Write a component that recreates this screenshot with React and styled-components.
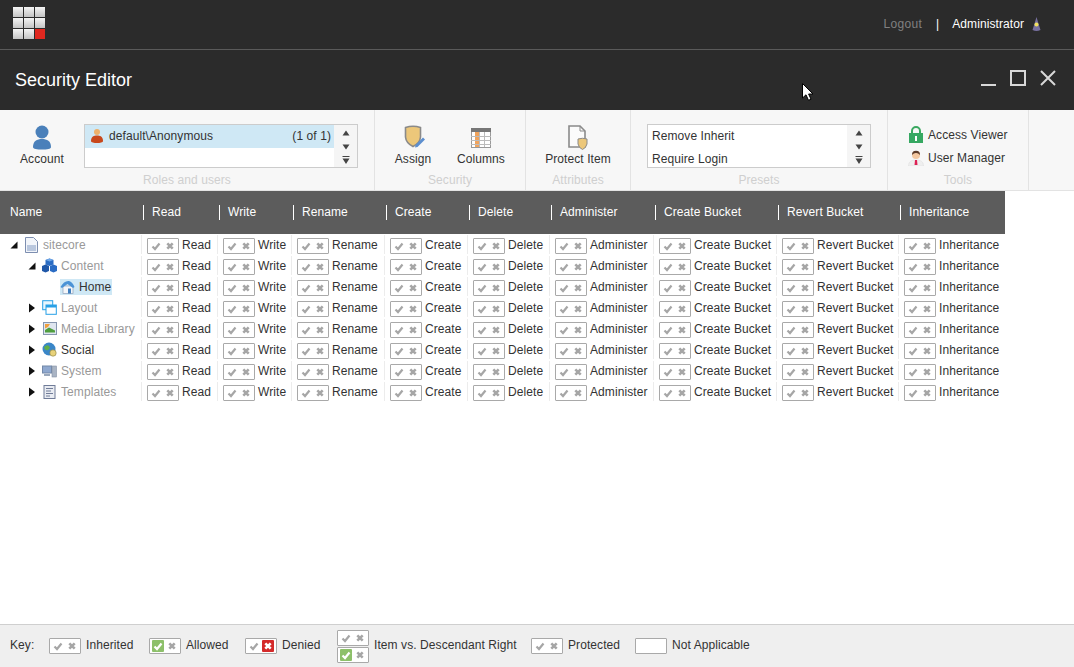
import React from "react"
import styled, { createGlobalStyle } from "styled-components"

const GlobalStyle = createGlobalStyle`
  html, body {
    margin: 0;
    padding: 0;
    height: 100%;
    background: #fff;
    font-family: "Liberation Sans", Arial, sans-serif;
    font-size: 12px;
    letter-spacing: 0.08px;
    color: #333;
  }
  * { box-sizing: border-box; }
`

const Page = styled.div`
  display: flex;
  flex-direction: column;
  height: 667px;
  overflow: hidden;
`

const TopBar = styled.header`
  display: flex;
  align-items: flex-start;
  justify-content: space-between;
  height: 50px;
  padding: 7px 33px 0 13px;
  background: #2b2b2b;
  border-bottom: 1px solid #5a5a5a;
`

const LogoGrid = styled.div`
  display: grid;
  grid-template-columns: repeat(3, 10px);
  grid-auto-rows: 10px;
  gap: 1px;
`

const LogoTile = styled.span`
  background: ${props => (props.$red ? "#e0281f" : "linear-gradient(#f4f4f4, #c4c4c4)")};
`

const UserArea = styled.div`
  display: flex;
  align-items: center;
  height: 34px;
  color: #fff;
`

const Logout = styled.span`
  color: #808080;
  letter-spacing: 0.3px;
  margin-right: 14px;
`

const Pipe = styled.span`
  margin-right: 13px;
`

const UserName = styled.span`
  margin-right: 8px;
`

const TitleBar = styled.div`
  position: relative;
  display: flex;
  align-items: center;
  justify-content: space-between;
  height: 60px;
  padding: 0 18px 0 15px;
  background: #2b2b2b;
`

const Title = styled.h1`
  margin: 0;
  font-size: 18px;
  font-weight: normal;
  letter-spacing: 0;
  color: #fff;
`

const WindowButtons = styled.div`
  display: flex;
  align-items: center;
  gap: 14px;
  margin-top: -4px;
`

const Cursor = styled.svg`
  position: absolute;
  left: 802px;
  top: 33px;
`

const Ribbon = styled.div`
  display: flex;
  height: 81px;
  flex: none;
  background: #f7f7f7;
  border-bottom: 1px solid #e3e3e3;
`

const Chunk = styled.section`
  display: flex;
  flex-direction: column;
  width: ${props => props.$width}px;
  border-right: 1px solid #e3e3e3;
`

const ChunkBody = styled.div`
  display: flex;
  height: 62px;
  padding: ${props => props.$padding || "14px 0 0 0"};
`

const Caption = styled.div`
  text-align: center;
  color: #cfcfcf;
  line-height: 14px;
  margin-top: 1px;
`

const LargeButton = styled.div`
  display: flex;
  flex-direction: column;
  align-items: center;
  width: ${props => props.$width || 68}px;
  height: 44px;
  color: #333;
  line-height: 14px;
  svg { display: block; height: 26px; margin-bottom: 2px; }
`

const ListBox = styled.div`
  display: flex;
  width: ${props => props.$width}px;
  height: 44px;
  background: #fff;
  border: 1px solid #ccc;
`

const ListRows = styled.div`
  flex: 1;
  min-width: 0;
`

const ListRow = styled.div`
  display: flex;
  align-items: center;
  justify-content: space-between;
  height: 23px;
  padding: 0 3px 2px ${props => (props.$selected ? 6 : 4)}px;
  background: ${props => (props.$selected ? "#cfe8f5" : "transparent")};
`

const ListLabel = styled.span`
  display: flex;
  align-items: center;
  gap: 6px;
`

const ScrollColumn = styled.div`
  display: flex;
  flex-direction: column;
  align-items: center;
  justify-content: space-between;
  flex: none;
  width: 23px;
  padding: 3px 0 2px;
  background: #f5f5f5;
`

const ToolList = styled.div`
  display: flex;
  flex-direction: column;
`

const ToolRow = styled.div`
  display: flex;
  align-items: center;
  gap: 4px;
  height: 23px;
  svg { flex: none; }
`

const Table = styled.div`
  flex: 1;
  width: 1005px;
`

const HeaderRow = styled.div`
  display: grid;
  grid-template-columns: 143px 76px 74px 93px 83px 82px 104px 123px 122px 105px;
  height: 43px;
  background: #5c5c5c;
  color: #fff;
  align-items: center;
`

const HeaderCell = styled.div`
  height: 15px;
  line-height: 15px;
  padding-left: ${props => (props.$first ? 10 : 8)}px;
  border-left: ${props => (props.$first ? "none" : "1px solid #fff")};
`

const Row = styled.div`
  display: grid;
  grid-template-columns: 141px 76px 74px 93px 83px 82px 104px 123px 122px 107px;
  height: 21px;
`

const TreeCell = styled.div`
  display: flex;
  align-items: center;
  padding-left: ${props => props.$indent}px;
  color: ${props => props.$color || "#999"};
`

const Toggle = styled.svg`
  flex: none;
  width: 8px;
  height: 10px;
  margin-right: 6px;
  visibility: ${props => (props.$hidden ? "hidden" : "visible")};
`

const TreeLabel = styled.span`
  display: flex;
  align-items: center;
  gap: 4px;
  height: 16px;
  padding-right: ${props => (props.$selected ? 1 : 0)}px;
  background: ${props => (props.$selected ? "#cfe8f5" : "transparent")};
`

const TreeIconSlot = styled.span`
  display: flex;
  align-items: center;
  justify-content: center;
  flex: none;
  width: 15px;
  height: 16px;
`

const PermCell = styled.div`
  display: flex;
  align-items: center;
  gap: 3px;
  margin: 1px 0;
  padding-left: 5px;
  border-left: 1px solid #ececec;
  color: #333;
  white-space: nowrap;
`

const Tray = styled.span`
  display: flex;
  flex: none;
  align-items: center;
  justify-content: space-between;
  width: 32px;
  height: 16px;
  margin-top: 2px;
  padding: 0 2px;
  background: #fff;
  border: 1px solid #a9a9a9;
  border-radius: 1px;
`

const Mark = styled.span`
  display: flex;
  align-items: center;
  justify-content: center;
  width: 12px;
  height: 12px;
  border-radius: 1px;
  background: ${props => props.$bg || "transparent"};
`

const KeyBar = styled.footer`
  display: flex;
  align-items: center;
  gap: 15px;
  flex: none;
  height: 43px;
  padding: 0 0 2px 10px;
  background: #efefef;
  border-top: 1px solid #cfcfcf;
`

const KeyItem = styled.div`
  display: flex;
  align-items: center;
  gap: 5px;
`

const KeyLabel = styled.span`
  width: ${props => props.$width}px;
  white-space: nowrap;
`

const KeyStack = styled.div`
  display: flex;
  flex-direction: column;
  gap: 1px;
  margin-top: 2px;
  ${Tray} { margin-top: 0; }
`

const CheckGlyph = ({ color = "#a6a6a6" }) => (
  <svg width="10" height="10" viewBox="0 0 10 10">
    <path d="M1.5 5.5 L4 8 L8.5 2.5" fill="none" stroke={color} strokeWidth="2.2" />
  </svg>
)

const CrossGlyph = ({ color = "#a6a6a6" }) => (
  <svg width="10" height="10" viewBox="0 0 10 10">
    <path d="M2.3 2.3 L7.7 7.7 M7.7 2.3 L2.3 7.7" fill="none" stroke={color} strokeWidth="2.6" />
  </svg>
)

const PermTray = ({ allowed, denied, empty }) => (
  <Tray>
    {!empty && (
      <>
        <Mark $bg={allowed ? "#8dc06a" : undefined}>
          <CheckGlyph color={allowed ? "#fff" : "#a6a6a6"} />
        </Mark>
        <Mark $bg={denied ? "#d42a2a" : undefined}>
          <CrossGlyph color={denied ? "#fff" : "#a6a6a6"} />
        </Mark>
      </>
    )}
  </Tray>
)

const Arrow = ({ kind }) => (
  <svg width="10" height="10" viewBox="0 0 10 10">
    {kind === "up" && <path d="M1.5 7.5 L8.5 7.5 L5 2.5 Z" fill="#444" />}
    {kind === "down" && <path d="M1.5 2.5 L8.5 2.5 L5 7.5 Z" fill="#444" />}
    {kind === "end" && <path d="M1.5 1 H8.5 V2 H1.5 Z M1.5 3.5 L8.5 3.5 L5 9 Z" fill="#444" />}
  </svg>
)

const Scroller = () => (
  <ScrollColumn>
    <Arrow kind="up" />
    <Arrow kind="down" />
    <Arrow kind="end" />
  </ScrollColumn>
)

const AccountIcon = () => (
  <svg width="20" height="26" viewBox="0 0 20 26">
    <circle cx="10" cy="8" r="6.5" fill="#4a80ba" />
    <path d="M1 23 C1 17 5 15 10 15 C15 15 19 17 19 23 C19 25 15 25.5 10 25.5 C5 25.5 1 25 1 23 Z" fill="#4a80ba" />
  </svg>
)

const PersonIcon = () => (
  <svg width="12" height="15" viewBox="0 0 12 15">
    <circle cx="6" cy="4" r="3" fill="#eeb06a" />
    <path d="M0 13 C0 8.5 3 7.5 6 7.5 C9 7.5 12 8.5 12 13 C12 14.5 9 15 6 15 C3 15 0 14.5 0 13 Z" fill="#c8481c" />
  </svg>
)

const AdminIcon = () => (
  <svg width="9" height="15" viewBox="0 0 9 15">
    <path d="M4.5 0 L6 5 L8.5 13 Q4.5 15 0.5 13 L3 5 Z" fill="#77709f" />
    <circle cx="4.5" cy="7.5" r="2" fill="#f0e060" />
  </svg>
)

const AssignIcon = () => (
  <svg width="26" height="26" viewBox="-4 0 26 26">
    <path d="M1.5 3.5 Q9 1 16.5 3.5 V13 Q16 19 9 22.5 Q2 19 1.5 13 Z" fill="#ecc77a" stroke="#8a8a8a" strokeWidth="1.6" />
    <path d="M11.5 21 L19 13.5 L21 15.5 L13.5 23 L11 23.5 Z" fill="#5d8fcf" />
  </svg>
)

const ColumnsIcon = () => (
  <svg width="22" height="26" viewBox="0 0 22 26">
    <rect x="1.5" y="4.5" width="19" height="19" fill="#fff" stroke="#999" />
    <rect x="1" y="4" width="20" height="4" fill="#777" />
    <rect x="5" y="8" width="4" height="15" fill="#f0a35c" />
    <path d="M9.5 8 V23 M14.5 8 V23 M1 12.5 H21 M1 16.5 H21 M1 20.5 H21" stroke="#bbb" strokeWidth="1" />
  </svg>
)

const ProtectIcon = () => (
  <svg width="22" height="26" viewBox="0 0 22 26">
    <path d="M2 2 H13 L18 7 V23 H2 Z" fill="#fbfbfb" stroke="#8a8a8a" strokeWidth="1.6" />
    <path d="M13 2 V7 H18" fill="none" stroke="#8a8a8a" />
    <path d="M11 15 Q15.5 13.5 20 15 V20 Q19 24 15.5 25.5 Q12 24 11 20 Z" fill="#ecc77a" stroke="#8a8a8a" />
  </svg>
)

const LockIcon = () => (
  <svg width="16" height="17" viewBox="0 0 16 17">
    <path d="M4 8 V5 A4 4 0 0 1 12 5 V8" fill="none" stroke="#3aa860" strokeWidth="2" />
    <rect x="1" y="7" width="14" height="10" fill="#36a862" />
    <rect x="7" y="10" width="2" height="5" fill="#fff" />
  </svg>
)

const ManagerIcon = () => (
  <svg width="16" height="16" viewBox="0 0 16 16">
    <path d="M0.5 16 C0.5 11 4 10 8 10 C12 10 15.5 11 15.5 16 Z" fill="#efefef" stroke="#ddd" strokeWidth="0.5" />
    <path d="M7 10 H9 L9.5 15 H6.5 Z" fill="#dd2255" />
    <circle cx="8" cy="5" r="4" fill="#f3c7a0" />
    <path d="M4 5 Q4 0.8 8 0.8 Q12 0.8 12 5 Q10 2.8 8 3 Q6 2.8 4 5 Z" fill="#5a3a2a" />
  </svg>
)

const treeIcons = {
  doc: (
    <svg width="13" height="16" viewBox="0 0 13 16">
      <path d="M0.5 0.5 H8.5 L12.5 4.5 V15.5 H0.5 Z" fill="#f2f5fa" stroke="#7d8eb0" />
      <rect x="2" y="8" width="9" height="6" fill="#b9c7de" />
    </svg>
  ),
  cubes: (
    <svg width="15" height="15" viewBox="0 0 15 15">
      <path d="M7.5 0.5 L11.5 2 V6.5 L7.5 8 L3.5 6.5 V2 Z" fill="#2a6cc4" />
      <path d="M3.5 6.5 L7 8 V13 L3.5 14.5 L0 13 V8 Z" fill="#1f57a8" />
      <path d="M11.5 6.5 L15 8 V13 L11.5 14.5 L8 13 V8 Z" fill="#2a6cc4" />
      <path d="M7.5 0.5 L11.5 2 L7.5 3.5 L3.5 2 Z" fill="#6ea6e6" />
    </svg>
  ),
  home: (
    <svg width="15" height="15" viewBox="0 0 15 15">
      <rect x="3" y="7" width="10" height="7.5" fill="#f4f6f9" stroke="#8fa0b8" strokeWidth="0.7" />
      <path d="M0.5 8 Q4 1.5 9 2 Q12.5 3 14.5 8 L13 9 L7.5 5 L2 9 Z" fill="#4b93d6" />
      <rect x="8" y="9.5" width="3" height="5" fill="#3e7fc0" />
    </svg>
  ),
  layout: (
    <svg width="15" height="15" viewBox="0 0 15 15">
      <rect x="0.7" y="0.7" width="10" height="9" fill="#e8f6fe" stroke="#27a0e6" />
      <rect x="4" y="5" width="10.3" height="9.3" fill="#fff" stroke="#27a0e6" />
      <rect x="4" y="5" width="10.3" height="2.5" fill="#27a0e6" />
    </svg>
  ),
  media: (
    <svg width="14" height="13" viewBox="0 0 14 13">
      <rect x="0.5" y="0.5" width="13" height="12" fill="#dfe6f0" stroke="#8696b0" />
      <path d="M2 10.5 V8 L6 5.5 L12 8.5 V10.5 Z" fill="#4f9e3f" />
      <path d="M2 2 H7 L5 5 L2 6.5 Z" fill="#f0a040" />
    </svg>
  ),
  social: (
    <svg width="15" height="15" viewBox="0 0 15 15">
      <circle cx="7" cy="7" r="6.5" fill="#3a86c8" />
      <path d="M2 5 Q5 2 7 4 Q9 6 6 8 Q3 9 2 5 Z" fill="#5fae4a" />
      <circle cx="11" cy="11" r="3.2" fill="#e8d27a" stroke="#8a8040" strokeWidth="0.6" />
    </svg>
  ),
  system: (
    <svg width="15" height="14" viewBox="0 0 15 14">
      <rect x="0.5" y="2" width="9" height="7" fill="#8fa8cf" stroke="#7288a8" />
      <rect x="2" y="10" width="6" height="2" fill="#9aa8bc" />
      <rect x="10" y="2" width="4.5" height="11" fill="#a9b4c4" stroke="#8592a6" strokeWidth="0.6" />
    </svg>
  ),
  templates: (
    <svg width="13" height="14" viewBox="0 0 13 14">
      <rect x="1" y="0.5" width="11" height="13" fill="#e9ecf2" stroke="#707c98" />
      <path d="M3 3.5 H10 M3 6 H8 M3 8.5 H10 M3 11 H7" stroke="#707c98" strokeWidth="1" />
    </svg>
  ),
}

const TreeToggle = ({ state }) => (
  <Toggle viewBox="0 0 8 10" $hidden={!state}>
    {state === "open" ? <path d="M0.5 8.5 H7.5 V1.5 Z" fill="#111" /> : <path d="M1 0.5 L7 5 L1 9.5 Z" fill="#111" />}
  </Toggle>
)

const columns = ["Read", "Write", "Rename", "Create", "Delete", "Administer", "Create Bucket", "Revert Bucket", "Inheritance"]

const items = [
  { name: "sitecore", icon: "doc", indent: 10, toggle: "open" },
  { name: "Content", icon: "cubes", indent: 28, toggle: "open" },
  { name: "Home", icon: "home", indent: 46, selected: true, color: "#333" },
  { name: "Layout", icon: "layout", indent: 28, toggle: "closed" },
  { name: "Media Library", icon: "media", indent: 28, toggle: "closed" },
  { name: "Social", icon: "social", indent: 28, toggle: "closed", color: "#333" },
  { name: "System", icon: "system", indent: 28, toggle: "closed" },
  { name: "Templates", icon: "templates", indent: 28, toggle: "closed" },
]

export default function App() {
  return (
    <Page>
      <GlobalStyle />
      <TopBar>
        <LogoGrid>
          {Array.from({ length: 9 }, (_, i) => (
            <LogoTile key={i} $red={i === 8} />
          ))}
        </LogoGrid>
        <UserArea>
          <Logout>Logout</Logout>
          <Pipe>|</Pipe>
          <UserName>Administrator</UserName>
          <AdminIcon />
        </UserArea>
      </TopBar>

      <TitleBar>
        <Title>Security Editor</Title>
        <Cursor width="12" height="18" viewBox="0 0 12 18">
          <path d="M0.5 0.5 V15 L4 11.8 L6.5 17.3 L9 16.2 L6.6 11 H11 Z" fill="#fff" stroke="#000" />
        </Cursor>
        <WindowButtons>
          <svg width="16" height="16" viewBox="0 0 16 16">
            <rect x="1" y="14" width="15" height="2" fill="#d8d8d8" />
          </svg>
          <svg width="16" height="16" viewBox="0 0 16 16">
            <rect x="1" y="1" width="14" height="14" fill="none" stroke="#d8d8d8" strokeWidth="2" />
          </svg>
          <svg width="16" height="16" viewBox="0 0 16 16">
            <path d="M1 1 L15 15 M15 1 L1 15" stroke="#d8d8d8" strokeWidth="2" />
          </svg>
        </WindowButtons>
      </TitleBar>

      <Ribbon>
        <Chunk $width={375}>
          <ChunkBody $padding="14px 0 0 0">
            <LargeButton $width={84}>
              <AccountIcon />
              Account
            </LargeButton>
            <ListBox $width={274}>
              <ListRows>
                <ListRow $selected>
                  <ListLabel>
                    <PersonIcon />
                    default\Anonymous
                  </ListLabel>
                  <span>(1 of 1)</span>
                </ListRow>
              </ListRows>
              <Scroller />
            </ListBox>
          </ChunkBody>
          <Caption>Roles and users</Caption>
        </Chunk>
        <Chunk $width={151}>
          <ChunkBody $padding="14px 0 0 4px">
            <LargeButton>
              <AssignIcon />
              Assign
            </LargeButton>
            <LargeButton>
              <ColumnsIcon />
              Columns
            </LargeButton>
          </ChunkBody>
          <Caption>Security</Caption>
        </Chunk>
        <Chunk $width={105}>
          <ChunkBody>
            <LargeButton $width={104}>
              <ProtectIcon />
              Protect Item
            </LargeButton>
          </ChunkBody>
          <Caption>Attributes</Caption>
        </Chunk>
        <Chunk $width={257}>
          <ChunkBody $padding="14px 0 0 16px">
            <ListBox $width={224}>
              <ListRows>
                <ListRow>Remove Inherit</ListRow>
                <ListRow>Require Login</ListRow>
              </ListRows>
              <Scroller />
            </ListBox>
          </ChunkBody>
          <Caption>Presets</Caption>
        </Chunk>
        <Chunk $width={141}>
          <ChunkBody $padding="13px 0 0 20px">
            <ToolList>
              <ToolRow>
                <LockIcon />
                Access Viewer
              </ToolRow>
              <ToolRow>
                <ManagerIcon />
                User Manager
              </ToolRow>
            </ToolList>
          </ChunkBody>
          <Caption>Tools</Caption>
        </Chunk>
      </Ribbon>

      <Table>
        <HeaderRow>
          <HeaderCell $first>Name</HeaderCell>
          {columns.map(col => (
            <HeaderCell key={col}>{col}</HeaderCell>
          ))}
        </HeaderRow>
        {items.map(item => (
          <Row key={item.name}>
            <TreeCell $indent={item.indent} $color={item.color}>
              <TreeToggle state={item.toggle} />
              <TreeLabel $selected={item.selected}>
                <TreeIconSlot>{treeIcons[item.icon]}</TreeIconSlot>
                {item.name}
              </TreeLabel>
            </TreeCell>
            {columns.map(col => (
              <PermCell key={col}>
                <PermTray />
                {col}
              </PermCell>
            ))}
          </Row>
        ))}
      </Table>

      <KeyBar>
        <KeyLabel $width={24}>Key:</KeyLabel>
        <KeyItem>
          <PermTray />
          <KeyLabel $width={48}>Inherited</KeyLabel>
        </KeyItem>
        <KeyItem>
          <PermTray allowed />
          <KeyLabel $width={44}>Allowed</KeyLabel>
        </KeyItem>
        <KeyItem>
          <PermTray denied />
          <KeyLabel $width={40}>Denied</KeyLabel>
        </KeyItem>
        <KeyItem>
          <KeyStack>
            <PermTray />
            <PermTray allowed />
          </KeyStack>
          <KeyLabel $width={142}>Item vs. Descendant Right</KeyLabel>
        </KeyItem>
        <KeyItem>
          <PermTray />
          <KeyLabel $width={52}>Protected</KeyLabel>
        </KeyItem>
        <KeyItem>
          <PermTray empty />
          <KeyLabel $width={80}>Not Applicable</KeyLabel>
        </KeyItem>
      </KeyBar>
    </Page>
  )
}
